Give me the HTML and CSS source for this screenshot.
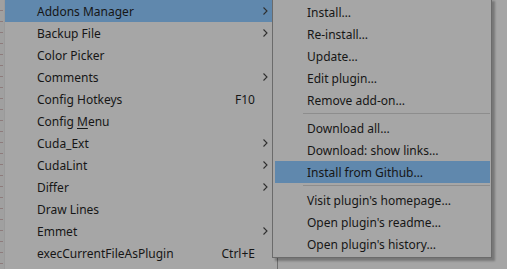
FILE: index.html
```html
<!DOCTYPE html>
<html>
<head>
<meta charset="utf-8">
<link rel="stylesheet" href="styles.css">
</head>
<body>
<div class="screen">
  <div class="gutter"></div>
  <div class="menu main">
    <div class="item active"><span class="label">Addons Manager</span><span class="key"></span><span class="arrow"><svg width="5" height="8" viewBox="0 0 5 8"><path d="M0.5 0.5 L4 4 L0.5 7.5" fill="none" stroke="#2e2e2e" stroke-width="1.1"/></svg></span></div>
    <div class="item"><span class="label">Backup File</span><span class="key"></span><span class="arrow"><svg width="5" height="8" viewBox="0 0 5 8"><path d="M0.5 0.5 L4 4 L0.5 7.5" fill="none" stroke="#2e2e2e" stroke-width="1.1"/></svg></span></div>
    <div class="item"><span class="label">Color Picker</span><span class="key"></span><span class="arrow"></span></div>
    <div class="item"><span class="label">Comments</span><span class="key"></span><span class="arrow"><svg width="5" height="8" viewBox="0 0 5 8"><path d="M0.5 0.5 L4 4 L0.5 7.5" fill="none" stroke="#2e2e2e" stroke-width="1.1"/></svg></span></div>
    <div class="item"><span class="label">Config Hotkeys</span><span class="key">F10</span><span class="arrow"></span></div>
    <div class="item"><span class="label">Config <u>M</u>enu</span><span class="key"></span><span class="arrow"></span></div>
    <div class="item"><span class="label">Cuda_Ext</span><span class="key"></span><span class="arrow"><svg width="5" height="8" viewBox="0 0 5 8"><path d="M0.5 0.5 L4 4 L0.5 7.5" fill="none" stroke="#2e2e2e" stroke-width="1.1"/></svg></span></div>
    <div class="item"><span class="label">CudaLint</span><span class="key"></span><span class="arrow"><svg width="5" height="8" viewBox="0 0 5 8"><path d="M0.5 0.5 L4 4 L0.5 7.5" fill="none" stroke="#2e2e2e" stroke-width="1.1"/></svg></span></div>
    <div class="item"><span class="label">Differ</span><span class="key"></span><span class="arrow"><svg width="5" height="8" viewBox="0 0 5 8"><path d="M0.5 0.5 L4 4 L0.5 7.5" fill="none" stroke="#2e2e2e" stroke-width="1.1"/></svg></span></div>
    <div class="item"><span class="label">Draw Lines</span><span class="key"></span><span class="arrow"></span></div>
    <div class="item"><span class="label">Emmet</span><span class="key"></span><span class="arrow"><svg width="5" height="8" viewBox="0 0 5 8"><path d="M0.5 0.5 L4 4 L0.5 7.5" fill="none" stroke="#2e2e2e" stroke-width="1.1"/></svg></span></div>
    <div class="item"><span class="label">execCurrentFileAsPlugin</span><span class="key">Ctrl+E</span><span class="arrow"></span></div>
  </div>
  <div class="menu sub">
    <div class="item"><span class="label">Install…</span></div>
    <div class="item"><span class="label">Re-install…</span></div>
    <div class="item"><span class="label">Update…</span></div>
    <div class="item"><span class="label">Edit plugin…</span></div>
    <div class="item"><span class="label">Remove add-on…</span></div>
    <div class="sep"></div>
    <div class="item"><span class="label">Download all…</span></div>
    <div class="item"><span class="label">Download: show links…</span></div>
    <div class="item active"><span class="label">Install from Github…</span></div>
    <div class="sep"></div>
    <div class="item"><span class="label">Visit plugin's homepage…</span></div>
    <div class="item"><span class="label">Open plugin's readme…</span></div>
    <div class="item"><span class="label">Open plugin's history…</span></div>
  </div>
</div>
</body>
</html>
```
FILE: styles.css
```css
html, body {
  margin: 0;
  padding: 0;
  background: #a5a5a5;
  overflow: hidden;
}
.screen {
  position: relative;
  width: 507px;
  height: 269px;
  overflow: hidden;
  display: flex;
  align-items: flex-start;
  font-family: "Noto Sans", "Open Sans", sans-serif;
  font-size: 12px;
  color: #161616;
}
.gutter {
  width: 5px;
  height: 269px;
  flex: none;
  background-color: #a0a0a0;
  background-image: repeating-linear-gradient(to bottom, transparent 0, transparent 10px, #8e7c7c 10px, #8e7c7c 11px);
  background-size: 3px 100%;
  background-repeat: no-repeat;
  border-right: 1px solid #9a9a9a;
  box-sizing: border-box;
}
.menu {
  background: #a6a6a6;
  box-sizing: border-box;
}
.main {
  width: 273px;
  height: 269px;
  flex: none;
  overflow: hidden;
  border-right: 1px solid #6e6e6e;
  display: flex;
  flex-direction: column;
}
.item {
  height: 22px;
  flex: none;
  display: flex;
  align-items: center;
  padding-left: 32px;
  box-sizing: border-box;
}
.item.active {
  background: #6088ad;
}
.main .label {
  flex: 1;
  white-space: nowrap;
}
.main .key {
  white-space: nowrap;
}
.main .arrow {
  width: 22px;
  height: 8px;
  display: flex;
  justify-content: flex-end;
  padding-right: 9px;
  box-sizing: border-box;
}
.main .arrow svg {
  display: block;
}
.sub {
  position: absolute;
  left: 272px;
  top: -2px;
  width: 220px;
  border: 1px solid #6b6b6b;
  padding: 2px 1px 2px 2px;
  display: flex;
  flex-direction: column;
  box-shadow: 3px 3px 2px rgba(0, 0, 0, 0.28);
}
.sub .label {
  white-space: nowrap;
}
.sep {
  height: 6px;
  flex: none;
  margin-left: 28px;
  position: relative;
}
.sep::before {
  content: "";
  position: absolute;
  left: 0;
  right: 0;
  top: 2px;
  border-top: 1px solid #8d8d8d;
}
u {
  text-decoration: underline;
  text-underline-offset: 2px;
}
```
